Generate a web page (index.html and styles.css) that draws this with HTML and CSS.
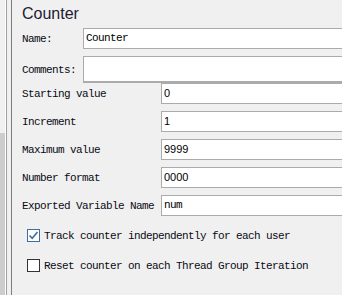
FILE: index.html
```html
<!DOCTYPE html>
<html>
<head>
<meta charset="utf-8">
<link rel="stylesheet" href="styles.css">
</head>
<body>
<div class="app">
  <div class="tree"></div>
  <div class="split"></div>
  <div class="content">
    <div class="title">Counter</div>
    <div class="grid grid-top">
      <div class="label">Name:</div>
      <div class="field mono">Counter</div>
      <div class="label">Comments:</div>
      <div class="field area"></div>
    </div>
    <div class="grid grid-main">
      <div class="label">Starting value</div>
      <div class="field sans">0</div>
      <div class="label">Increment</div>
      <div class="field sans">1</div>
      <div class="label">Maximum value</div>
      <div class="field sans">9999</div>
      <div class="label">Number format</div>
      <div class="field sans">0000</div>
      <div class="label">Exported Variable Name</div>
      <div class="field mono">num</div>
    </div>
    <div class="checks">
      <div class="check-row">
        <span class="box checked">
          <svg width="11" height="11" viewBox="0 0 11 11"><path d="M1.5 5.5 L4.2 8.2 L9.5 2" fill="none" stroke="#3a6ea5" stroke-width="1.6"/></svg>
        </span>
        <span class="label">Track counter independently for each user</span>
      </div>
      <div class="check-row">
        <span class="box"></span>
        <span class="label">Reset counter on each Thread Group Iteration</span>
      </div>
    </div>
  </div>
</div>
</body>
</html>
```

FILE: styles.css
```css
html, body {
  margin: 0;
  padding: 0;
  background: #f0f0f0;
}
.app {
  display: flex;
  width: 342px;
  height: 295px;
  overflow: hidden;
}
.tree {
  width: 5px;
  flex: none;
  border-right: 1px solid #ffffff;
  background: linear-gradient(#f0f0f0 0, #f0f0f0 133px, #cdcdcd 133px);
}
.split {
  width: 4px;
  flex: none;
  border-left: 1px solid #a0a0a0;
  border-right: 1px solid #7d7d7d;
  background: #f0f0f0;
}
.content {
  flex: 1;
  min-width: 0;
  padding-left: 10px;
  overflow: hidden;
}
.title {
  height: 24px;
  padding-top: 4px;
  line-height: 20px;
  font-family: "Liberation Sans", Arial, sans-serif;
  font-size: 16px;
  color: #1c1c30;
}
.grid {
  display: grid;
  row-gap: 7px;
  align-items: center;
  width: 400px;
}
.grid-top {
  grid-template-columns: 61px 1fr;
}
.grid-main {
  grid-template-columns: 139px 1fr;
}
.label {
  font-family: "Liberation Mono", "Courier New", monospace;
  font-size: 11px;
  letter-spacing: -0.6px;
  color: #0a0a14;
  white-space: nowrap;
}
.field {
  height: 19px;
  background: #ffffff;
  border: 1px solid #ababab;
  padding-left: 2px;
  line-height: 19px;
  color: #000;
  white-space: nowrap;
}
.field.area {
  height: 24px;
  border-bottom: 2px solid #ababab;
}
.mono {
  font-family: "Liberation Mono", "Courier New", monospace;
  font-size: 11px;
  letter-spacing: -0.6px;
}
.sans {
  font-family: "Liberation Sans", Arial, sans-serif;
  font-size: 11px;
}
.checks {
  display: flex;
  flex-direction: column;
  gap: 17px;
  padding-top: 13px;
  padding-left: 5px;
}
.check-row {
  display: flex;
  align-items: center;
  gap: 4px;
  height: 13px;
}
.box {
  width: 11px;
  height: 11px;
  border: 1px solid #333333;
  background: #ffffff;
  display: flex;
  align-items: center;
  justify-content: center;
  flex: none;
}
.box.checked {
  border-color: #3a6ea5;
}
```
